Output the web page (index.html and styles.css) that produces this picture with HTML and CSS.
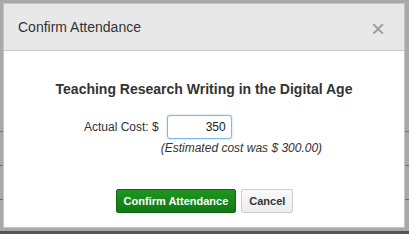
FILE: index.html
```html
<!DOCTYPE html>
<html lang="en">

<head>
    <meta charset="UTF-8">
    <title>Confirm Attendance</title>
    <link rel="stylesheet" href="styles.css">
</head>

<body>

    <div class="backdrop">
        <div class="row-line line-1"></div>
        <div class="row-line line-2"></div>
        <div class="row-line line-3"></div>

        <div class="modal">
            <div class="modal-header">
                <h3>Confirm Attendance</h3>
                <span class="close">&times;</span>
            </div>
            <div class="modal-body">
                <h4>Teaching Research Writing in the Digital Age</h4>
                <div class="cost-row">
                    <label for="cost">Actual Cost: $</label>
                    <div class="cost-field">
                        <input type="text" id="cost" value="350">
                        <p class="hint">(Estimated cost was $ 300.00)</p>
                    </div>
                </div>
                <div class="actions">
                    <button class="btn btn-confirm">Confirm Attendance</button>
                    <button class="btn btn-cancel">Cancel</button>
                </div>
            </div>
        </div>
    </div>

</body>

</html>
```

FILE: styles.css
```css
body {
    margin: 0;
    padding: 0;
    font-family: "Liberation Sans", Arial, sans-serif;
    background-color: #a9a9a9;
}

.backdrop {
    position: relative;
    width: 409px;
    height: 234px;
    padding: 3px 4px 0 3px;
    box-sizing: border-box;
    border-bottom: 3px solid #4c5663;
}

.row-line {
    position: absolute;
    left: 0;
    right: 0;
    height: 1px;
    background-color: #6d6d6d;
}

.line-1 { top: 131px; }
.line-2 { top: 165px; }
.line-3 { top: 199px; }

.modal {
    position: relative;
    background-color: #ffffff;
    border: 1px solid #c4c4c4;
    height: 225px;
    box-sizing: border-box;
}

.modal-header {
    display: flex;
    align-items: center;
    justify-content: space-between;
    height: 46px;
    padding: 0 19px 0 14px;
    background-color: #e8e8e8;
    border-bottom: 1px solid #c8c8c8;
}

.modal-header h3 {
    margin: 0;
    font-size: 14px;
    font-weight: normal;
    color: #333333;
}

.close {
    font-size: 24px;
    line-height: 1;
    color: #9a9a9a;
    margin-top: 4px;
}

.modal-body {
    padding: 30px 20px 0;
}

.modal-body h4 {
    margin: 0 0 18px;
    text-align: center;
    font-size: 14px;
    color: #333333;
}

.cost-row {
    display: flex;
    align-items: flex-start;
    padding-left: 60px;
}

.cost-row label {
    font-size: 12px;
    color: #333333;
    margin-top: 5px;
    margin-right: 8px;
}

.cost-field input {
    width: 65px;
    height: 24px;
    box-sizing: border-box;
    border: 1px solid #7db7ee;
    border-radius: 3px;
    text-align: right;
    font-family: inherit;
    font-size: 12px;
    color: #222222;
    padding: 2px 5px;
    box-shadow: 0 0 2px rgba(82, 168, 236, 0.6);
}

.hint {
    margin: 2px 0 0 -6px;
    font-size: 12px;
    font-style: italic;
    color: #333333;
    white-space: nowrap;
}

.actions {
    display: flex;
    justify-content: center;
    gap: 5px;
    margin-top: 34px;
    padding-left: 1px;
}

.btn {
    height: 24px;
    padding: 0 7px;
    font-family: inherit;
    font-size: 11px;
    font-weight: bold;
    border-radius: 2px;
}

.btn-confirm {
    color: #ffffff;
    background: linear-gradient(#1f9421, #127a14);
    border: 1px solid #0e6a10;
}

.btn-cancel {
    color: #333333;
    background: linear-gradient(#fafafa, #ececec);
    border: 1px solid #cccccc;
}
```
